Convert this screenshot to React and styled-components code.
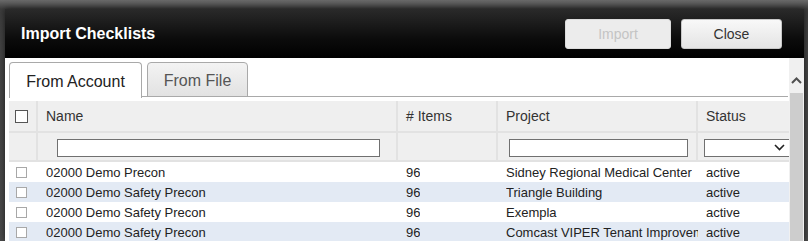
import React from "react";
import styled, { createGlobalStyle } from "styled-components";

const Global = createGlobalStyle`
  html, body { margin: 0; padding: 0; }
  body {
    width: 808px; height: 241px; overflow: hidden;
    background: linear-gradient(to bottom, #6a6a6a 0px, #3c3c3c 9px, #444 60px, #4a4a4a 241px);
    font-family: "Liberation Sans", Arial, sans-serif;
  }
`;

const Backdrop = styled.div`
  box-sizing: border-box;
  width: 808px;
  height: 241px;
  padding: 9px 4px 0 5px;
  display: flex;
  overflow: hidden;
`;

const Modal = styled.div`
  flex: 1;
  display: flex;
  flex-direction: column;
  background: #fff;
  box-shadow: 0 0 6px rgba(0,0,0,0.6);
`;

const Header = styled.div`
  height: 49px;
  flex: none;
  display: flex;
  align-items: center;
  padding: 0 22px 0 16px;
  background: linear-gradient(to bottom, #2a2a2a 0%, #0c0c0c 60%, #000 100%);
`;

const Title = styled.div`
  flex: 1;
  color: #fff;
  font-weight: bold;
  font-size: 16px;
  margin-top: 1px;
`;

const Button = styled.button`
  box-sizing: border-box;
  width: ${p => p.$w}px;
  height: 30px;
  margin-left: ${p => p.$ml}px;
  border-radius: 3px;
  border: 1px solid ${p => (p.disabled ? "#dcdcdc" : "#c8c8c8")};
  background: ${p => (p.disabled ? "#ececec" : "linear-gradient(to bottom, #f8f8f8, #e4e4e4)")};
  color: ${p => (p.disabled ? "#c4c4c4" : "#333")};
  font-family: "Liberation Sans", Arial, sans-serif;
  font-size: 14px;
  font-weight: normal;
  padding: 0;
`;

const Body = styled.div`
  flex: 1;
  display: flex;
  min-height: 0;
`;

const Content = styled.div`
  flex: 1;
  min-width: 0;
  overflow: hidden;
  padding: 4px 0 0 4px;
`;

const TabBar = styled.div`
  display: flex;
  gap: 5px;
  height: 35px;
  box-sizing: border-box;
  border-bottom: 1px solid #a9a9a9;
  margin-right: 1px;
`;

const Tab = styled.div`
  box-sizing: border-box;
  width: ${p => p.$w}px;
  height: ${p => (p.$active ? 36 : 35)}px;
  border: 1px solid #a9a9a9;
  border-bottom: ${p => (p.$active ? "none" : "1px solid #a9a9a9")};
  border-radius: 4px 4px 0 0;
  background: ${p => (p.$active ? "#fff" : "linear-gradient(to bottom, #f3f3f3, #e2e2e2)")};
  color: ${p => (p.$active ? "#222" : "#555")};
  font-size: 16px;
  display: flex;
  align-items: center;
  justify-content: center;
  padding-top: 2px;
`;

const TableWrap = styled.div`
  margin-top: 4px;
  width: 780px;
  overflow: hidden;
`;

const Grid = styled.div`
  display: grid;
  grid-template-columns: 29px 360px 100px 200px 120px;
  width: 809px;
`;

const HeadCell = styled.div`
  box-sizing: border-box;
  height: ${p => p.$h}px;
  background: #efefef;
  border-right: 2px solid #e2e2e2;
  border-bottom: 2px solid #e2e2e2;
  display: flex;
  align-items: center;
  padding-left: ${p => p.$pl ?? 8}px;
  color: #333;
  font-size: 14px;
`;

const Cell = styled.div`
  height: 20px;
  background: ${p => (p.$alt ? "#e3eaf4" : "#fff")};
  display: flex;
  align-items: center;
  padding-left: ${p => p.$pl ?? 8}px;
  color: #222;
  font-size: 13px;
  white-space: nowrap;
  overflow: hidden;
  min-width: 0;
`;

const CellText = styled.span`
  display: block;
  overflow: hidden;
  white-space: nowrap;
  max-width: 100%;
`;

const Box = styled.span`
  box-sizing: border-box;
  display: inline-block;
  width: ${p => p.$s}px;
  height: ${p => p.$s}px;
  border: 1px solid ${p => p.$c};
  background: #fff;
`;

const TextInput = styled.div`
  box-sizing: border-box;
  width: ${p => p.$w}px;
  height: 18px;
  border: 1px solid #707070;
  background: #fff;
  margin-top: 2px;
`;

const Select = styled(TextInput)`
  display: flex;
  align-items: center;
  justify-content: flex-end;
  padding-right: 4px;
`;

const Scrollbar = styled.div`
  width: 15px;
  flex: none;
  display: flex;
  flex-direction: column;
  background: #f0f0f0;
`;

const ArrowBtn = styled.div`
  box-sizing: border-box;
  height: 35px;
  display: flex;
  align-items: center;
  justify-content: center;
  padding-top: 9px;
  flex: none;
`;

const Thumb = styled.div`
  flex: 1;
  background: #cdcdcd;
  margin: 0 1px 0 1px;
`;

const rows = [
  ["02000 Demo Precon", "96", "Sidney Regional Medical Center", "active"],
  ["02000 Demo Safety Precon", "96", "Triangle Building", "active"],
  ["02000 Demo Safety Precon", "96", "Exempla", "active"],
  ["02000 Demo Safety Precon", "96", "Comcast VIPER Tenant Improvement", "active"],
];

export default function App() {
  return (
    <>
      <Global />
      <Backdrop>
        <Modal>
          <Header>
            <Title>Import Checklists</Title>
            <Button disabled $w={106} $ml={0}>Import</Button>
            <Button $w={101} $ml={10}>Close</Button>
          </Header>
          <Body>
            <Content>
              <TabBar>
                <Tab $active $w={133}>From Account</Tab>
                <Tab $w={101}>From File</Tab>
              </TabBar>
              <TableWrap>
                <Grid>
                  <HeadCell $h={32} $pl={6}><Box $s={13} $c="#555" /></HeadCell>
                  <HeadCell $h={32}>Name</HeadCell>
                  <HeadCell $h={32}>#&nbsp;Items</HeadCell>
                  <HeadCell $h={32}>Project</HeadCell>
                  <HeadCell $h={32}>Status</HeadCell>

                  <HeadCell $h={29} />
                  <HeadCell $h={29} $pl={19}><TextInput $w={323} /></HeadCell>
                  <HeadCell $h={29} />
                  <HeadCell $h={29} $pl={11}><TextInput $w={179} /></HeadCell>
                  <HeadCell $h={29} $pl={6}>
                    <Select $w={86}>
                      <svg width="11" height="7" viewBox="0 0 11 7">
                        <path d="M1 1l4.5 4.5L10 1" fill="none" stroke="#222" strokeWidth="1.6" />
                      </svg>
                    </Select>
                  </HeadCell>

                  {rows.map((r, i) => (
                    <React.Fragment key={i}>
                      <Cell $alt={i % 2 === 1} $pl={7}><Box $s={11} $c="#a8a8a8" /></Cell>
                      <Cell $alt={i % 2 === 1}><CellText>{r[0]}</CellText></Cell>
                      <Cell $alt={i % 2 === 1}><CellText>{r[1]}</CellText></Cell>
                      <Cell $alt={i % 2 === 1}><CellText>{r[2]}</CellText></Cell>
                      <Cell $alt={i % 2 === 1}><CellText>{r[3]}</CellText></Cell>
                    </React.Fragment>
                  ))}
                </Grid>
              </TableWrap>
            </Content>
            <Scrollbar>
              <ArrowBtn>
                <svg width="11" height="7" viewBox="0 0 11 7">
                  <path d="M1 6l4.5-4.5L10 6" fill="none" stroke="#505050" strokeWidth="2" />
                </svg>
              </ArrowBtn>
              <Thumb />
            </Scrollbar>
          </Body>
        </Modal>
      </Backdrop>
    </>
  );
}
